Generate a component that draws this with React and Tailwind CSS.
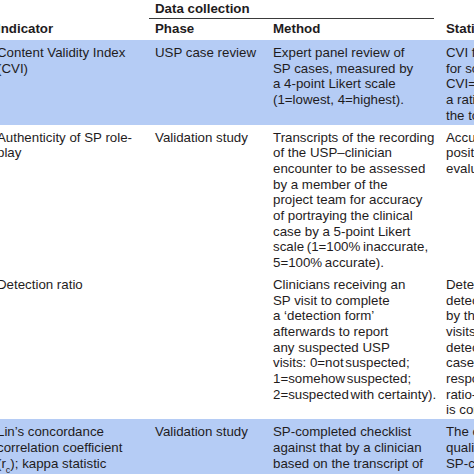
import React from "react";

const Lines = ({ lines, className = "" }) => (
  <div className={className}>
    {lines.map((l, i) => (
      <div key={i} className="whitespace-nowrap">
        {l}
      </div>
    ))}
  </div>
);

const rows = [
  {
    blue: true,
    ind: ["Content Validity Index", "(CVI)"],
    phase: ["USP case review"],
    method: [
      "Expert panel review of",
      "SP cases, measured by",
      "a 4-point Likert scale",
      "(1=lowest, 4=highest).",
    ],
    stats: [
      "CVI for each item",
      "for scale-level",
      "CVI= proportion of",
      "a rating of 3 or 4",
      "the total experts",
    ],
  },
  {
    blue: false,
    ind: ["Authenticity of SP role-", "play"],
    phase: ["Validation study"],
    method: [
      "Transcripts of the recording",
      "of the USP–clinician",
      "encounter to be assessed",
      "by a member of the",
      "project team for accuracy",
      "of portraying the clinical",
      "case by a 5-point Likert",
      <span className="[word-spacing:-1px]">scale (1=100% inaccurate,</span>,
      <span className="[word-spacing:-1px]">5=100% accurate).</span>,
    ],
    stats: ["Accuracy rate of", "positive", "evaluation"],
  },
  {
    blue: false,
    ind: ["Detection ratio"],
    phase: [""],
    method: [
      "Clinicians receiving an",
      "SP visit to complete",
      "a ‘detection form’",
      "afterwards to report",
      "any suspected USP",
      <span>
        visits: 0=not<span className="[word-spacing:-2px]"> suspected;</span>
      </span>,
      <span className="[word-spacing:-2px]">1=somehow suspected;</span>,
      <span>
        <span className="[word-spacing:-2px]">2=suspected </span>with certainty).
      </span>,
    ],
    stats: [
      "Detection ratio =",
      "detected visits",
      "by the clinicians",
      "visits; the",
      "detected",
      "cases with",
      "responses",
      "ratio-based",
      "is computed",
    ],
  },
  {
    blue: true,
    ind: [
      "Lin’s concordance",
      "correlation coefficient",
      <span>
        (r<sub className="text-[9px] align-[-3px]">c</sub>); kappa statistic
      </span>,
      "",
    ],
    phase: ["Validation study"],
    method: [
      "SP-completed checklist",
      "against that by a clinician",
      "based on the transcript of",
      "the recording",
    ],
    stats: ["The concordance", "quality of the", "SP-completed", "checklist"],
  },
];

export default function App() {
  return (
    <div className="w-[474px] h-[474px] overflow-hidden bg-white text-[#1f1c1d] font-['Liberation_Sans',Arial,sans-serif] text-[13.3px] leading-[15.7px]">
      <div className="ml-[-9px] w-[650px]">
        {/* Header */}
        <div className="grid grid-cols-[158px_118px_173px_201px]">
          <div className="row-span-2 flex items-end pl-[6px] pb-[3px] font-bold leading-[16px]">
            Indicator
          </div>
          <div className="col-span-2">
            <div className="mr-[6px] border-b border-[#3a3a3a] pt-[1px] pb-[1px] pl-[6px] font-bold leading-[16px] h-[19px]">
              Data collection
            </div>
          </div>
          <div className="row-span-2 flex items-end pl-[6px] pb-[3px] font-bold leading-[16px]">
            Statistics
          </div>
          <div className="pl-[6px] pt-[2px] pb-[3px] font-bold leading-[16px]">Phase</div>
          <div className="pl-[6px] pt-[2px] pb-[3px] font-bold leading-[16px]">Method</div>
        </div>

        {rows.map((r, i) => (
          <div
            key={i}
            className={`grid grid-cols-[158px_118px_173px_201px] pt-[5px] pb-[1px] ${
              r.blue ? "bg-[#b5ccf5]" : "bg-white"
            }`}
          >
            <Lines lines={r.ind} className="pl-[6px]" />
            <Lines lines={r.phase} className="pl-[6px]" />
            <Lines lines={r.method} className="pl-[6px]" />
            <Lines lines={r.stats} className="pl-[6px]" />
          </div>
        ))}
      </div>
    </div>
  );
}
